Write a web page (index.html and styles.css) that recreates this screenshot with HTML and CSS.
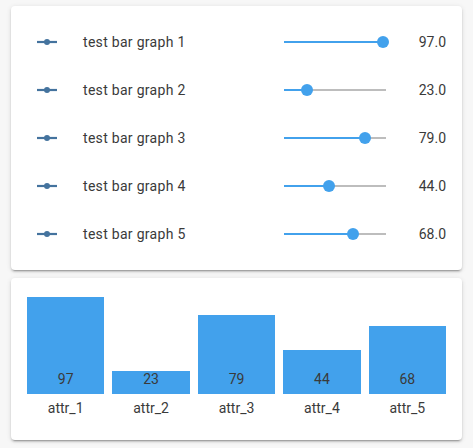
FILE: index.html
```html
<!DOCTYPE html>
<html>
<head>
<meta charset="utf-8">
<link rel="stylesheet" href="styles.css">
</head>
<body>
<div class="card entities">
  <div class="row">
    <div class="badge"><svg viewBox="0 0 24 24" width="24" height="24"><path d="M2 12H22" stroke="#44739e" stroke-width="2.2"/><circle cx="12" cy="12" r="3" fill="#44739e"/></svg></div>
    <div class="name">test bar graph 1</div>
    <div class="slider"><div class="fill" style="width:97%"></div><div class="thumb" style="left:97%"></div></div>
    <div class="value">97.0</div>
  </div>
  <div class="row">
    <div class="badge"><svg viewBox="0 0 24 24" width="24" height="24"><path d="M2 12H22" stroke="#44739e" stroke-width="2.2"/><circle cx="12" cy="12" r="3" fill="#44739e"/></svg></div>
    <div class="name">test bar graph 2</div>
    <div class="slider"><div class="fill" style="width:23%"></div><div class="thumb" style="left:23%"></div></div>
    <div class="value">23.0</div>
  </div>
  <div class="row">
    <div class="badge"><svg viewBox="0 0 24 24" width="24" height="24"><path d="M2 12H22" stroke="#44739e" stroke-width="2.2"/><circle cx="12" cy="12" r="3" fill="#44739e"/></svg></div>
    <div class="name">test bar graph 3</div>
    <div class="slider"><div class="fill" style="width:79%"></div><div class="thumb" style="left:79%"></div></div>
    <div class="value">79.0</div>
  </div>
  <div class="row">
    <div class="badge"><svg viewBox="0 0 24 24" width="24" height="24"><path d="M2 12H22" stroke="#44739e" stroke-width="2.2"/><circle cx="12" cy="12" r="3" fill="#44739e"/></svg></div>
    <div class="name">test bar graph 4</div>
    <div class="slider"><div class="fill" style="width:44%"></div><div class="thumb" style="left:44%"></div></div>
    <div class="value">44.0</div>
  </div>
  <div class="row">
    <div class="badge"><svg viewBox="0 0 24 24" width="24" height="24"><path d="M2 12H22" stroke="#44739e" stroke-width="2.2"/><circle cx="12" cy="12" r="3" fill="#44739e"/></svg></div>
    <div class="name">test bar graph 5</div>
    <div class="slider"><div class="fill" style="width:68%"></div><div class="thumb" style="left:68%"></div></div>
    <div class="value">68.0</div>
  </div>
</div>
<div class="card bars">
  <div class="col"><div class="plot"><div class="bar" style="height:97px"><span>97</span></div></div><div class="label">attr_1</div></div>
  <div class="col"><div class="plot"><div class="bar" style="height:23px"><span>23</span></div></div><div class="label">attr_2</div></div>
  <div class="col"><div class="plot"><div class="bar" style="height:79px"><span>79</span></div></div><div class="label">attr_3</div></div>
  <div class="col"><div class="plot"><div class="bar" style="height:44px"><span>44</span></div></div><div class="label">attr_4</div></div>
  <div class="col"><div class="plot"><div class="bar" style="height:68px"><span>68</span></div></div><div class="label">attr_5</div></div>
</div>
</body>
</html>
```
FILE: styles.css
```css
html, body {
  margin: 0;
  padding: 0;
  background: #f7f7f7;
}
body {
  padding: 6px 11px;
  font-family: Roboto, "Liberation Sans", sans-serif;
  font-size: 14px;
  color: #3a3a3a;
}
.card {
  background: #fff;
  border-radius: 4px;
  box-shadow: 0 2px 2px 0 rgba(0,0,0,0.14), 0 1px 5px 0 rgba(0,0,0,0.12), 0 3px 1px -2px rgba(0,0,0,0.2);
}
.entities {
  padding: 16px;
  display: flex;
  flex-direction: column;
  gap: 8px;
}
.row {
  display: flex;
  align-items: center;
  height: 40px;
}
.badge {
  width: 40px;
  height: 40px;
  display: flex;
  align-items: center;
  justify-content: center;
  margin-right: 16px;
}
.badge svg { display: block; }
.name {
  flex: 1;
  letter-spacing: 0.3px;
}
.slider {
  position: relative;
  width: 102px;
  height: 2px;
  background: #bdbdbd;
}
.fill {
  height: 2px;
  background: #42a1ec;
}
.thumb {
  position: absolute;
  top: -5px;
  width: 12px;
  height: 12px;
  margin-left: -6px;
  border-radius: 50%;
  background: #42a1ec;
}
.value {
  width: 60px;
  text-align: right;
}
.bars {
  margin-top: 8px;
  padding: 16px;
  display: flex;
  gap: 8px;
  height: 130px;
}
.col {
  flex: 1;
  display: flex;
  flex-direction: column;
}
.plot {
  height: 100px;
  display: flex;
  align-items: flex-end;
}
.bar {
  width: 100%;
  background: #42a1ec;
  display: flex;
  align-items: flex-end;
  justify-content: center;
}
.bar span {
  line-height: 14px;
  padding-bottom: 8px;
}
.label {
  text-align: center;
  margin-top: 6px;
}
```
